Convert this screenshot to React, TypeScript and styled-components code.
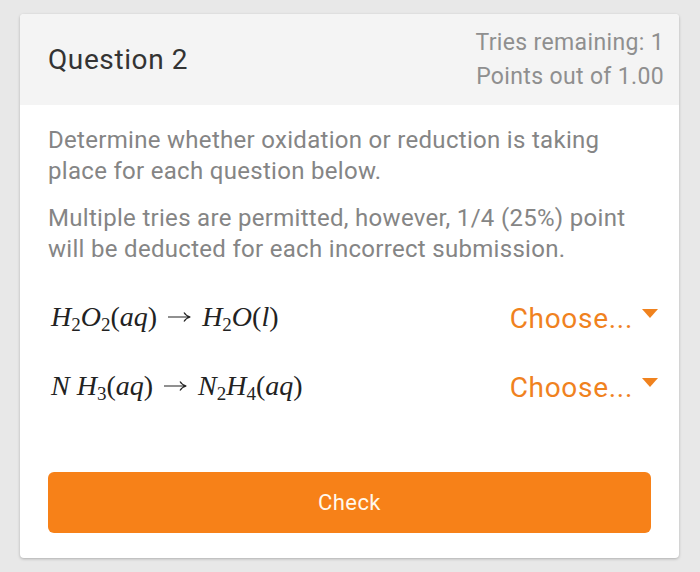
import React from 'react';
import styled, { createGlobalStyle } from 'styled-components';

const GlobalStyle = createGlobalStyle`
  html, body {
    margin: 0;
    padding: 0;
    background: #e8e8e8;
    font-family: Roboto, "Liberation Sans", sans-serif;
  }
`;

const Page = styled.div`
  width: 700px;
  height: 572px;
  padding: 14px 21px 0 20px;
  box-sizing: border-box;
`;

const Card = styled.div`
  background: #fff;
  border-radius: 4px;
  box-shadow: 0 1px 3px rgba(0, 0, 0, 0.25);
  overflow: hidden;
  height: 544px;
`;

const Header = styled.div`
  display: flex;
  justify-content: space-between;
  align-items: center;
  background: #f4f4f4;
  height: 91px;
  padding: 0 15px 0 28px;
`;

const Title = styled.div`
  font-size: 28px;
  letter-spacing: 0.6px;
  color: #333;
`;

const Meta = styled.div`
  text-align: right;
  font-size: 23px;
  letter-spacing: 0.35px;
  line-height: 34px;
  color: #8f8f8f;
`;

const Body = styled.div`
  padding: 20px 28px 0 28px;
`;

const Paragraph = styled.p`
  margin: 0 0 16px;
  font-size: 24px;
  letter-spacing: 0.3px;
  line-height: 31px;
  color: #858585;

  &:last-of-type {
    margin-bottom: 0;
  }
`;

const Equations = styled.div`
  margin-top: 19px;
`;

const EquationRow = styled.div`
  display: flex;
  justify-content: space-between;
  align-items: center;
  height: 69px;
`;

const Equation = styled.div`
  font-family: "Liberation Serif", serif;
  font-style: italic;
  font-size: 28px;
  color: #222;
  padding-left: 3px;

  sub {
    font-style: normal;
    font-size: 19px;
    vertical-align: -5px;
  }

  .up {
    font-style: normal;
  }
`;

const ArrowIcon = styled.svg`
  width: 23px;
  height: 12px;
  margin: 0 11px;
  vertical-align: 3px;
`;

const Select = styled.div`
  display: flex;
  align-items: center;
  gap: 9px;
  color: #f0821e;
  font-size: 28px;
  letter-spacing: 0.7px;
  margin-right: -7px;
`;

const Caret = styled.svg`
  width: 16px;
  height: 10px;
  margin-top: -9px;
`;

const CheckButton = styled.button`
  display: block;
  width: 100%;
  height: 61px;
  margin-top: 50px;
  border: none;
  border-radius: 6px;
  background: #f78118;
  color: #fff8ec;
  font-family: Roboto, "Liberation Sans", sans-serif;
  font-size: 22px;
  letter-spacing: 0.4px;
`;

const Up = ({ children }: { children: React.ReactNode }) => <span className="up">{children}</span>;

const Arrow = () => (
  <ArrowIcon viewBox="0 0 23 12">
    <path d="M0 6H22M16 1.5Q18 5 22.3 6Q18 7 16 10.5" fill="none" stroke="#222" strokeWidth="1.2" />
  </ArrowIcon>
);

const Choice = () => (
  <Select>
    Choose...
    <Caret viewBox="0 0 16 10">
      <path d="M0 0H16L8 9Z" fill="#f0821e" />
    </Caret>
  </Select>
);

export default function App() {
  return (
    <Page>
      <GlobalStyle />
      <Card>
        <Header>
          <Title>Question 2</Title>
          <Meta>
            Tries remaining: 1
            <br />
            Points out of 1.00
          </Meta>
        </Header>
        <Body>
          <Paragraph>
            Determine whether oxidation or reduction is taking place for each question below.
          </Paragraph>
          <Paragraph>
            Multiple tries are permitted, however, 1/4 (25%) point will be deducted for each
            incorrect submission.
          </Paragraph>
          <Equations>
            <EquationRow>
              <Equation>
                H<sub>2</sub>O<sub>2</sub><Up>(</Up>aq<Up>)</Up><Arrow />H<sub>2</sub>O<Up>(</Up>l<Up>)</Up>
              </Equation>
              <Choice />
            </EquationRow>
            <EquationRow>
              <Equation>
                N H<sub>3</sub><Up>(</Up>aq<Up>)</Up><Arrow />N<sub>2</sub>H<sub>4</sub><Up>(</Up>aq<Up>)</Up>
              </Equation>
              <Choice />
            </EquationRow>
          </Equations>
          <CheckButton>Check</CheckButton>
        </Body>
      </Card>
    </Page>
  );
}
